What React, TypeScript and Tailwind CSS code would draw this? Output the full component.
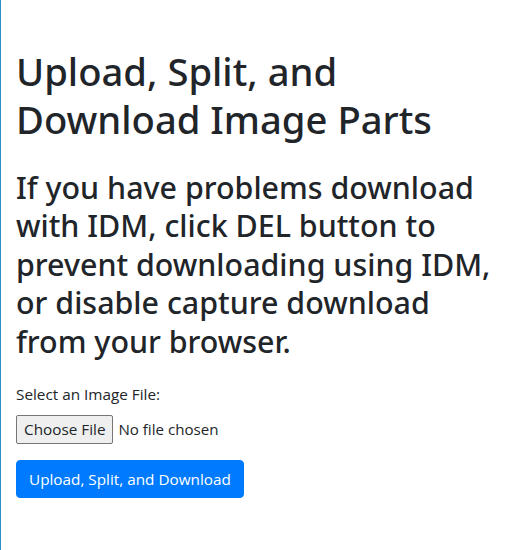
import React from "react";

export default function App() {
  return (
    <div
      className="min-h-[550px] border-l border-[#2b8fc5] bg-white text-[#212529]"
      style={{ fontFamily: '"Open Sans", sans-serif' }}
    >
      <div className="px-[15px] pt-[47px]">
        <h1
          className="mb-[26px] text-[38.2px] font-medium leading-[48px]"
          style={{ fontFamily: '"Noto Sans", "Open Sans", sans-serif' }}
        >
          Upload, Split, and Download Image Parts
        </h1>
        <h2
          className="mb-[21px] text-[30.4px] font-medium leading-[38.4px]"
          style={{ fontFamily: '"Noto Sans", "Open Sans", sans-serif' }}
        >
          If you have problems download with IDM, click DEL button to prevent downloading using IDM, or disable
          capture download from your browser.
        </h2>
        <form onSubmit={(e) => e.preventDefault()}>
          <div className="mb-4">
            <label className="mb-2 block text-[15.3px] leading-6">Select an Image File:</label>
            <div className="flex h-[30px] items-center">
              <span className="flex h-[29px] items-center rounded-[2px] border border-[#767676] bg-[#efefef] px-[7px] text-[15.3px] leading-6">
                Choose File
              </span>
              <span className="ml-[5px] text-[15.1px] leading-6">No file chosen</span>
            </div>
          </div>
          <button
            type="submit"
            className="h-[38px] rounded-[4px] border border-[#007bff] bg-[#007bff] px-3 text-[15.3px] leading-6 text-white"
          >
            Upload, Split, and Download
          </button>
        </form>
      </div>
    </div>
  );
}
